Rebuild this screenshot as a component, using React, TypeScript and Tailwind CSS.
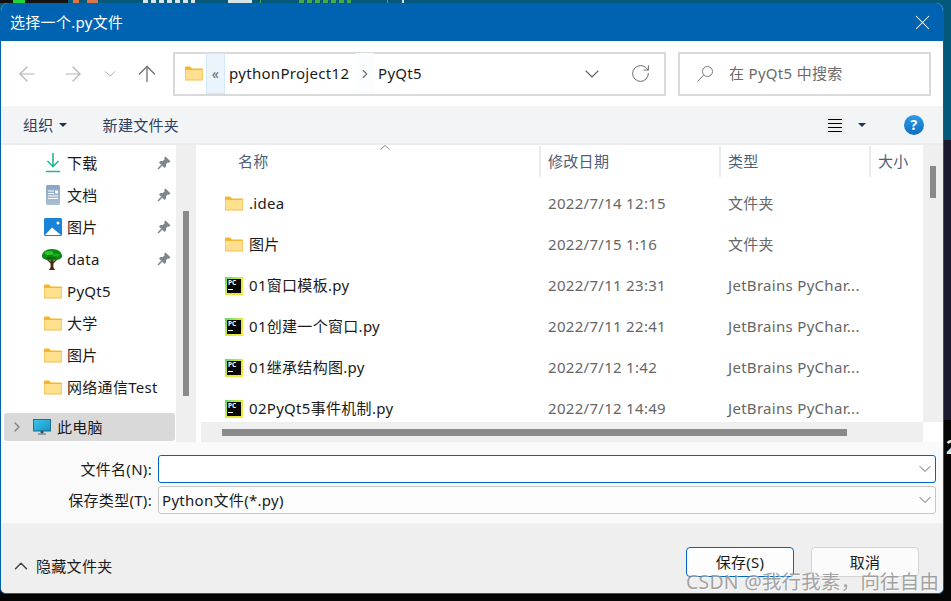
import { ArrowLeft, ArrowRight, ArrowUp, ChevronDown, ChevronRight, ChevronUp, RotateCw, X } from "lucide-react";

const SidebarItems = [
  { label: "下载", icon: "download", pin: true },
  { label: "文档", icon: "doc", pin: true },
  { label: "图片", icon: "pic", pin: true },
  { label: "data", icon: "tree", pin: true },
  { label: "PyQt5", icon: "folder", pin: false },
  { label: "大学", icon: "folder", pin: false },
  { label: "图片", icon: "folder", pin: false },
  { label: "网络通信Test", icon: "folder", pin: false },
];

const Files = [
  { name: ".idea", date: "2022/7/14 12:15", type: "文件夹", py: false },
  { name: "图片", date: "2022/7/15 1:16", type: "文件夹", py: false },
  { name: "01窗口模板.py", date: "2022/7/11 23:31", type: "JetBrains PyChar...", py: true },
  { name: "01创建一个窗口.py", date: "2022/7/11 22:41", type: "JetBrains PyChar...", py: true },
  { name: "01继承结构图.py", date: "2022/7/12 1:42", type: "JetBrains PyChar...", py: true },
  { name: "02PyQt5事件机制.py", date: "2022/7/12 14:49", type: "JetBrains PyChar...", py: true },
];

// bits of the window behind the dialog that stick out at the top
const TopBits = [
  "w-[13px] bg-[#101010]",
  "w-[12px] bg-[#1fd63a]",
  "w-[43px] bg-[#141414]",
  "w-[5px] bg-[#04587a]",
  "w-[6px] bg-[#d9774a]",
  "w-[8px] bg-[#04587a]",
  "w-[11px] bg-[#d9774a]",
  "w-[45px] bg-[#04587a]",
  "w-[52px] bg-[repeating-linear-gradient(90deg,#d8e4e8_0,#d8e4e8_5px,#04587a_5px,#04587a_8px)]",
  "w-[33px] bg-[#04587a]",
  "w-[24px] bg-[#d8e4e8]",
  "w-[8px] bg-[#04587a]",
  "w-[1px] bg-[#3fae4a]",
  "w-[38px] bg-[#04587a]",
  "w-[52px] bg-[repeating-linear-gradient(90deg,#3fae4a_0,#3fae4a_5px,#04587a_5px,#04587a_8px)]",
  "w-[36px] bg-[#04587a]",
  "w-[1px] bg-[#3fae4a]",
  "w-[14px] bg-[#04587a]",
  "w-[2px] bg-[#d8e4e8]",
];

function FolderIcon() {
  return (
    <svg width="18" height="15" viewBox="0 0 18 15" className="shrink-0">
      <path d="M0 1.5A1 1 0 0 1 1 .5h4l2 2h10a1 1 0 0 1 1 1V6H0z" fill="#f6b526" />
      <rect x="0" y="3.500" width="18" height="11" rx="0.800" fill="#f3bb45" />
      <rect x="0.600" y="4" width="16.800" height="9.600" fill="#fee08f" />
    </svg>
  );
}

function PinIcon() {
  return (
    <svg width="14" height="14" viewBox="0 0 14 14" className="shrink-0">
      <path d="M8.500.4 13.600 5.500 12 6.800 10.800 6.400 9 8.200 9 10.600 7.500 12 2 6.500 3.400 5 5.800 5 7.600 3.200 7.200 2z" fill="#7f878d" />
      <path d="M4.600 9.300 1 13" stroke="#7f878d" strokeWidth="1.600" />
    </svg>
  );
}

function SideIcon({ name }: { name: string }) {
  if (name === "download")
    return (
      <svg width="18" height="20" viewBox="0 0 18 20" className="shrink-0">
        <path d="M9 0v13M3.500 8 9 13.500 14.500 8" fill="none" stroke="#22b59a" strokeWidth="1.600" />
        <path d="M2 18.500h14" stroke="#22b59a" strokeWidth="1.600" />
      </svg>
    );
  if (name === "doc")
    return (
      <svg width="18" height="20" viewBox="0 0 18 20" className="shrink-0">
        <defs>
          <linearGradient id="docFill" x1="0" y1="0" x2="0" y2="1">
            <stop offset="0" stopColor="#8aa4c4" />
            <stop offset="1" stopColor="#a9bed6" />
          </linearGradient>
        </defs>
        <rect x="2" y="0" width="14" height="20" rx="1.500" fill="url(#docFill)" />
        <path d="M4 6h6M4 8.500h6M4 11h10M4 13.500h10" stroke="#fff" strokeWidth="1.100" />
        <rect x="11" y="5.500" width="3" height="3" fill="#fff" />
      </svg>
    );
  if (name === "pic")
    return (
      <svg width="18" height="18" viewBox="0 0 18 18" className="shrink-0">
        <rect x="0" y="0" width="18" height="18" rx="1.500" fill="#1883d7" />
        <path d="M1 17 8 9.500 17 17z" fill="#fff" />
        <circle cx="14" cy="5" r="1.500" fill="#fff" />
      </svg>
    );
  if (name === "tree")
    return (
      <svg width="20" height="21" viewBox="0 0 20 21" className="shrink-0">
        <path d="M8.300 11h3.400l-.4 7 1.700 3H7l1.700-3z" fill="#4a2a14" />
        <path d="M4 9 9 14M16 9l-5 5" stroke="#4a2a14" strokeWidth="1.300" />
        <path d="M0 7C0 3 4 0 10 0s10 3 10 7c0 3-3 3-5 4-3 .6-7 .6-10 0-2-1-5-1-5-4z" fill="#0b8a12" />
        <ellipse cx="7" cy="4" rx="4.500" ry="2" fill="#2fc52a" />
        <ellipse cx="14" cy="6" rx="3.500" ry="1.500" fill="#1fae20" />
        <ellipse cx="9" cy="9" rx="5" ry="1.300" fill="#056b0a" />
      </svg>
    );
  return <FolderIcon />;
}

function PyIcon() {
  return (
    <div className="flex h-[18px] w-[18px] shrink-0 items-center justify-center bg-gradient-to-br from-[#3ddc6a] via-[#d8ea3a] to-[#f5e93a]">
      <div className="flex h-[14px] w-[14px] flex-col bg-[#050505] pl-[1px] leading-none tracking-normal text-white">
        <span className="font-bold text-[6.500px] leading-[8px]">PC</span>
        <span className="mt-[2px] h-[1px] w-[5px] bg-white" />
      </div>
    </div>
  );
}

function Caret() {
  return <span className="h-0 w-0 border-x-[4px] border-t-[4px] border-x-transparent border-t-[#1f3358]" />;
}

export default function App() {
  return (
    <div
      className="relative h-[601px] w-[951px] overflow-hidden bg-[linear-gradient(#04587a_0,#04587a_140px,#1c1a2e_140px,#1c1a2e_420px,#050505_420px)] pt-[3px] text-[15px] tracking-[0.3px] text-[#1a1a1a]"
      style={{ fontFamily: '"Noto Sans", "Noto Sans CJK SC", sans-serif' }}
    >
      <div className="absolute left-0 top-0 flex h-[3px]">
        {TopBits.map((c, i) => (
          <span key={i} className={`h-[3px] ${c}`} />
        ))}
      </div>
      <span className="absolute left-[946px] top-[432px] text-[20px] font-bold text-[#e8e4d0]">2</span>

      {/* Dialog window */}
      <div className="relative flex h-[591px] w-[944px] flex-col overflow-hidden rounded-t-[8px] rounded-b-[6px] border-x border-b border-[#0063b1] bg-white">
        {/* Title bar */}
        <div className="flex h-[38px] shrink-0 items-center justify-between bg-[#0063b1] pl-[9px] pr-[8px] text-white">
          <span>选择一个.py文件</span>
          <X size={25} strokeWidth={1} />
        </div>

        {/* Nav row */}
        <div className="flex h-[65px] shrink-0 items-center bg-white">
          <div className="flex w-[172px] shrink-0 items-center">
            <ArrowLeft size={24} strokeWidth={1.200} className="ml-[14px] text-[#b4b4b4]" />
            <ArrowRight size={24} strokeWidth={1.200} className="ml-[22px] text-[#b4b4b4]" />
            <ChevronDown size={18} strokeWidth={1.300} className="ml-[16px] text-[#a8a8a8]" />
            <ArrowUp size={26} strokeWidth={1.200} className="ml-[15px] text-[#6e6e6e]" />
          </div>
          <div className="flex h-[44px] w-[493px] shrink-0 items-center border-2 border-[#d9d9d9]">
            <div className="ml-[10px] mr-[3px]">
              <FolderIcon />
            </div>
            <div className="flex h-[41px] w-[19px] shrink-0 items-center justify-center border border-[#d3e7f9] bg-[#eaf4fd] text-[14px] leading-none text-[#666]">
              «
            </div>
            <span className="ml-[4px] w-[127px] shrink-0">pythonProject12</span>
            <div className="flex h-[41px] w-[18px] shrink-0 items-center justify-center bg-[#fbfdfe]">
              <ChevronRight size={14} strokeWidth={2} className="text-[#707070]" />
            </div>
            <span className="ml-[4px]">PyQt5</span>
            <ChevronDown size={24} strokeWidth={1.100} className="ml-auto mr-[26px] text-[#606060]" />
            <RotateCw size={21} strokeWidth={1.100} className="mr-[13px] text-[#666]" />
          </div>
          <div className="ml-[12px] flex h-[44px] w-[253px] shrink-0 items-center border-2 border-[#d9d9d9] text-[#6b6b6b]">
            <svg width="18" height="18" viewBox="0 0 18 18" fill="none" stroke="#7a7a7a" strokeWidth="1" className="ml-[16px]">
              <circle cx="11.500" cy="6.500" r="5" />
              <path d="M7.700 10 1.500 16.500" />
            </svg>
            <span className="ml-[15px]">在 PyQt5 中搜索</span>
          </div>
        </div>

        {/* Toolbar */}
        <div className="flex h-[39px] shrink-0 items-center border-b-2 border-[#ececee] bg-[#f3f4f6] pt-[1px] text-[#2e4060]">
          <span className="ml-[22px]">组织</span>
          <span className="ml-[5px] flex">
            <Caret />
          </span>
          <span className="ml-[36px]">新建文件夹</span>
          <div className="ml-auto flex h-[20px] w-[20px] flex-col items-center justify-center gap-[3px] bg-[#f0f0f0]">
            <span className="h-[1px] w-[14px] bg-black" />
            <span className="h-[1px] w-[14px] bg-black" />
            <span className="h-[1px] w-[14px] bg-black" />
            <span className="h-[1px] w-[14px] bg-black" />
          </div>
          <span className="ml-[13px] flex">
            <Caret />
          </span>
          <div className="ml-[38px] mr-[19px] flex h-[20px] w-[20px] items-center justify-center rounded-full bg-gradient-to-b from-[#2a9be8] to-[#0c6fc0] text-[14px] font-bold leading-none text-white">
            ?
          </div>
        </div>

        {/* Body */}
        <div className="flex h-[297px] shrink-0">
          {/* Sidebar */}
          <div className="w-[175px] shrink-0 pt-[2px]">
            {SidebarItems.map((item, i) => (
              <div key={i} className="flex h-[32px] items-center">
                <div className="flex w-[66px] shrink-0 justify-end pr-[5px]">
                  <SideIcon name={item.icon} />
                </div>
                <span>{item.label}</span>
                {item.pin && (
                  <span className="ml-auto mr-[5px]">
                    <PinIcon />
                  </span>
                )}
              </div>
            ))}
            <div className="ml-[3px] mr-[1px] mt-[10px] flex h-[28px] items-center rounded-[3px] bg-[#d9d9d9]">
              <ChevronRight size={16} strokeWidth={2} className="ml-[5px] text-[#808080]" />
              <svg width="18" height="16" viewBox="0 0 18 16" className="ml-[8px]">
                <defs>
                  <linearGradient id="pcFill" x1="0" y1="0" x2="1" y2="1">
                    <stop offset="0" stopColor="#3cc8e8" />
                    <stop offset="1" stopColor="#1890c8" />
                  </linearGradient>
                </defs>
                <rect x="0.500" y="0.500" width="17" height="11.500" fill="url(#pcFill)" stroke="#1a6f90" />
                <path d="M8 12h2v2H8zM5 15h8" stroke="#3c6a80" strokeWidth="1" />
              </svg>
              <span className="ml-[6px]">此电脑</span>
            </div>
          </div>

          {/* Sidebar scrollbar */}
          <div className="w-[20px] shrink-0 bg-[#efefef] pl-[7px] pt-[66px]">
            <div className="h-[185px] w-[6px] bg-[#8a8a8a]" />
          </div>

          {/* File list */}
          <div className="ml-[2px] flex w-[725px] shrink-0 flex-col">
            <div className="flex h-[277px] flex-col overflow-hidden">
              <div className="relative flex h-[32px] shrink-0 pt-[1px] text-[#4c607a]">
                <svg width="10" height="5" viewBox="0 0 10 5" fill="none" stroke="#8a8a8a" className="absolute left-[182px] top-[0px]">
                  <path d="M.5 4.500 5 .5l4.500 4" />
                </svg>
                <div className="flex w-[343px] shrink-0 items-center border-r-2 border-[#ececec] pl-[40px]">名称</div>
                <div className="flex w-[180px] shrink-0 items-center border-r-2 border-[#ececec] pl-[7px]">修改日期</div>
                <div className="flex w-[150px] shrink-0 items-center border-r-2 border-[#ececec] pl-[7px]">类型</div>
                <div className="flex items-center pl-[7px]">大小</div>
              </div>
              <div className="pt-[6px]">
                {Files.map((f) => (
                  <div key={f.name} className="flex h-[41px] items-center">
                    <div className="flex w-[342px] shrink-0 items-center pl-[27px]">
                      {f.py ? <PyIcon /> : <FolderIcon />}
                      <span className="ml-[6px]">{f.name}</span>
                    </div>
                    <span className="w-[180px] shrink-0 pl-[8px] text-[#666]">{f.date}</span>
                    <span className="pl-[8px] text-[#666]">{f.type}</span>
                  </div>
                ))}
              </div>
            </div>
            <div className="ml-[3px] h-[20px] shrink-0 bg-[#efefef] pl-[21px] pt-[7px]">
              <div className="h-[7px] w-[625px] bg-[#8a8a8a]" />
            </div>
          </div>

          {/* Vertical scrollbar */}
          <div className="w-[20px] shrink-0">
            <div className="h-[277px] bg-[#efefef] pl-[7px] pt-[21px]">
              <div className="h-[32px] w-[6px] bg-[#8a8a8a]" />
            </div>
          </div>
        </div>

        {/* File name + type */}
        <div className="flex h-[81px] shrink-0 flex-col gap-[3px] bg-[#fafafa] pt-[13px]">
          <div className="flex h-[28px] items-center">
            <span className="w-[151px] shrink-0 text-right">文件名(N):</span>
            <div className="ml-[6px] flex h-[28px] w-[778px] items-center justify-end rounded-[3px] border border-[#0067c0] bg-white">
              <ChevronDown size={20} strokeWidth={1.100} className="text-[#555]" />
            </div>
          </div>
          <div className="flex h-[28px] items-center">
            <span className="w-[151px] shrink-0 text-right">保存类型(T):</span>
            <div className="ml-[6px] flex h-[28px] w-[778px] items-center justify-between rounded-[3px] border border-[#c6c6c6] bg-[#fdfdfd] pl-[3px]">
              <span>Python文件(*.py)</span>
              <ChevronDown size={20} strokeWidth={1.100} className="text-[#555]" />
            </div>
          </div>
        </div>

        {/* Footer */}
        <div className="flex min-h-0 flex-1 items-start bg-[#efefef] pt-[24px]">
          <div className="ml-[9px] mt-[8px] flex h-[22px] items-center">
            <ChevronUp size={22} strokeWidth={1.600} className="text-[#444]" />
            <span className="ml-[4px]">隐藏文件夹</span>
          </div>
          <button className="ml-auto h-[30px] w-[108px] rounded-[4px] border border-[#0067c0] bg-[#fdfdfd]">保存(S)</button>
          <button className="ml-[17px] mr-[24px] h-[30px] w-[108px] rounded-[4px] border border-[#d4d4d4] bg-[#fbfbfb]">取消</button>
        </div>
      </div>

      {/* Watermark */}
      <span className="absolute left-[686px] top-[569px] text-[19.500px] leading-[26px] tracking-[0.2px] text-[#8c8c8c]/80 [text-shadow:1px_1px_1px_rgba(255,255,255,0.7)]">
        CSDN @我行我素，向往自由
      </span>
    </div>
  );
}
